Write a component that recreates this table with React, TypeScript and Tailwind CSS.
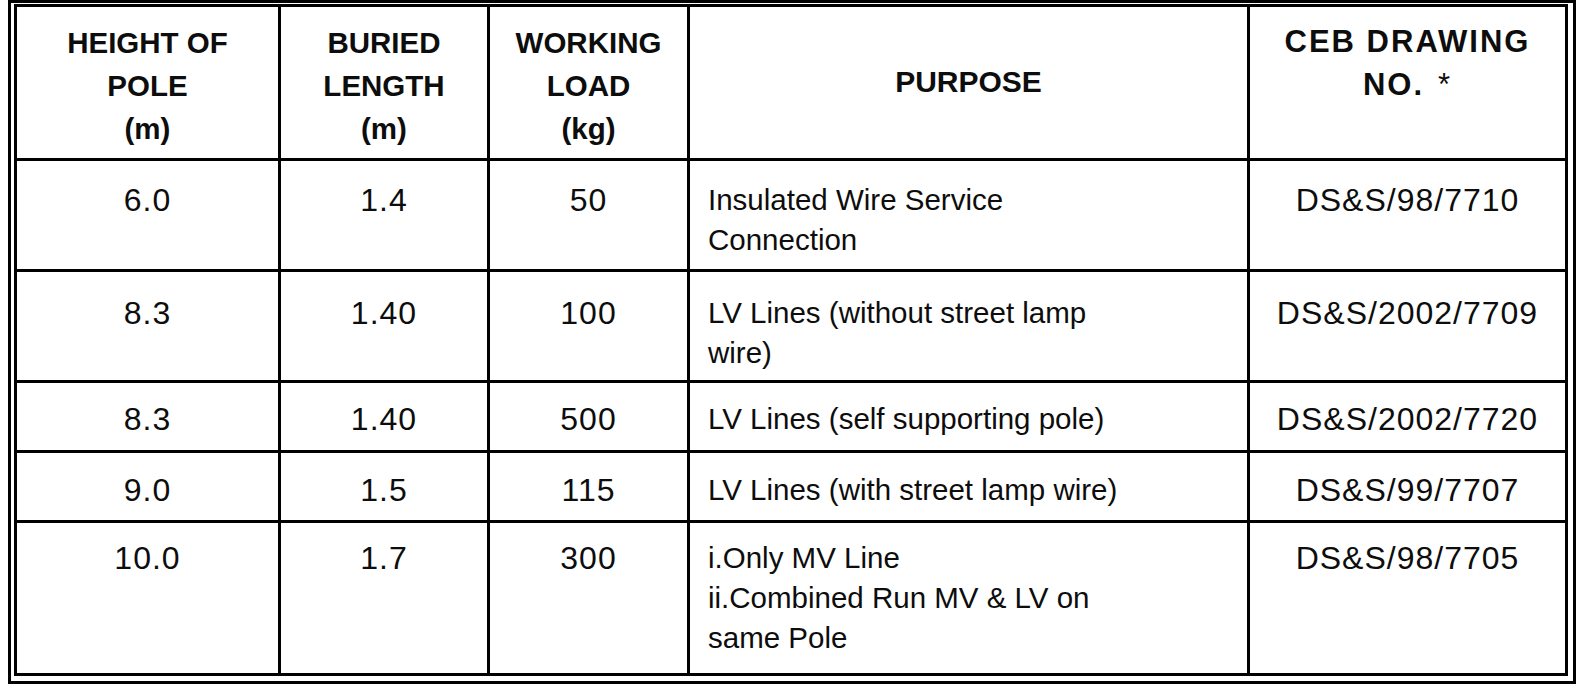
import React from 'react';

type Row = {
  pad: string;
  pole: string;
  buried: string;
  load: string;
  purpose: string[];
  drawing: string;
};

const rows: Row[] = [
  { pad: 'pt-[19px]', pole: '6.0', buried: '1.4', load: '50', purpose: ['Insulated Wire Service', 'Connection'], drawing: 'DS&S/98/7710' },
  { pad: 'pt-[21px]', pole: '8.3', buried: '1.40', load: '100', purpose: ['LV Lines (without street lamp', 'wire)'], drawing: 'DS&S/2002/7709' },
  { pad: 'pt-[16px]', pole: '8.3', buried: '1.40', load: '500', purpose: ['LV Lines (self supporting pole)'], drawing: 'DS&S/2002/7720' },
  { pad: 'pt-[17px]', pole: '9.0', buried: '1.5', load: '115', purpose: ['LV Lines (with street lamp wire)'], drawing: 'DS&S/99/7707' },
  { pad: 'pt-[15px]', pole: '10.0', buried: '1.7', load: '300', purpose: ['i.Only MV Line', 'ii.Combined Run MV & LV on', 'same Pole'], drawing: 'DS&S/98/7705' },
];

function HeadCell({ lines }: { lines: string[] }) {
  return (
    <div className="bg-white pt-[14px] text-center font-bold leading-[43px]">
      {lines.map((l, i) => (
        <div key={i}>{l}</div>
      ))}
    </div>
  );
}

export default function App() {
  return (
    <div className="min-h-screen bg-white font-['Liberation_Sans',Arial,sans-serif] text-[29.5px] leading-[41px] text-[#0d0d0d]">
      <div className="ml-[8px] w-[1568px] border-[3px] border-black pt-[1px] pr-[5px] pb-[5px] pl-[3px]">
        <div className="grid grid-cols-[261px_206px_197px_557px_315px] grid-rows-[151px_108px_108px_67px_67px_150px] gap-[3px] border-[3px] border-black bg-black">
          <HeadCell lines={['HEIGHT OF', 'POLE', '(m)']} />
          <HeadCell lines={['BURIED', 'LENGTH', '(m)']} />
          <HeadCell lines={['WORKING', 'LOAD', '(kg)']} />
          <div className="flex items-center justify-center bg-white pb-[2px] text-[30px] font-bold">PURPOSE</div>
          <div className="bg-white pt-[13px] text-center text-[31px] font-bold leading-[43px] tracking-[2px]">
            <div>CEB DRAWING</div>
            <div>
              NO.<span className="ml-[14px] inline-block align-top font-normal">*</span>
            </div>
          </div>

          {rows.map((r, i) => (
            <React.Fragment key={i}>
              <div className={`${r.pad} bg-white text-center text-[32px] tracking-[1px]`}>{r.pole}</div>
              <div className={`${r.pad} bg-white text-center text-[32px] tracking-[1px]`}>{r.buried}</div>
              <div className={`${r.pad} bg-white text-center text-[32px] tracking-[1px]`}>{r.load}</div>
              <div className={`${r.pad} bg-white pl-[18px] leading-[40px]`}>
                {r.purpose.map((p, j) => (
                  <div key={j}>{p}</div>
                ))}
              </div>
              <div className={`${r.pad} bg-white text-center text-[32px] tracking-[1px]`}>{r.drawing}</div>
            </React.Fragment>
          ))}
        </div>
      </div>
    </div>
  );
}
